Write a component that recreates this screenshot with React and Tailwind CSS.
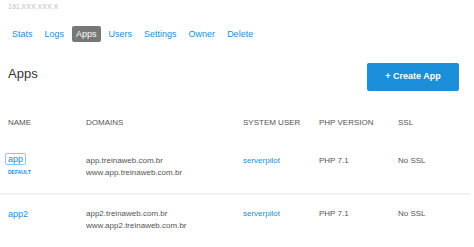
import React from 'react';

const navItems = ['Stats', 'Logs', 'Apps', 'Users', 'Settings', 'Owner', 'Delete'];

const apps = [
    { name: 'app', isDefault: true, domains: ['app.treinaweb.com.br', 'www.app.treinaweb.com.br'], user: 'serverpilot', php: 'PHP 7.1', ssl: 'No SSL' },
    { name: 'app2', isDefault: false, domains: ['app2.treinaweb.com.br', 'www.app2.treinaweb.com.br'], user: 'serverpilot', php: 'PHP 7.1', ssl: 'No SSL' }
];

const cols = 'grid grid-cols-[78px_157px_76px_79px_1fr]';

export default function App() {
    return (
        <div className="w-[474px] h-[247px] overflow-hidden bg-white font-['Liberation_Sans',Arial,sans-serif]">
            {/* Server IP */}
            <div className="pt-[2px] pl-[8px] text-[7px] leading-[9px] text-[#bdbdbd]">191.XXX.XXX.X</div>

            {/* Tabs */}
            <nav className="mt-[15px] pl-[8px] flex gap-[4px]">
                {navItems.map((item) => (
                    <a
                        key={item}
                        href="#"
                        className={`px-[4px] h-[16px] leading-[16px] text-[9px] rounded-[2px] ${
                            item === 'Apps' ? 'bg-[#777777] text-white' : 'text-[#1b8dd6]'
                        }`}
                    >
                        {item}
                    </a>
                ))}
            </nav>

            {/* Heading */}
            <div className="mt-[21px] pl-[8px] pr-[15px] flex items-start justify-between">
                <h1 className="mt-[3px] text-[13px] leading-[16px] text-[#333333]">Apps</h1>
                <button className="w-[92px] h-[28px] rounded-[2px] bg-[#1b8fd9] text-white text-[9px] font-bold">
                    + Create App
                </button>
            </div>

            {/* Table */}
            <div className="mt-[27px]">
                <div className={`${cols} pl-[8px] text-[8px] leading-[10px] text-[#555555] uppercase`}>
                    <div>Name</div>
                    <div>Domains</div>
                    <div>System User</div>
                    <div>PHP Version</div>
                    <div>SSL</div>
                </div>

                {apps.map((app, i) => (
                    <div
                        key={app.name}
                        className={`${cols} pl-[8px] w-[470px] text-[8px] leading-[12px] ${
                            i === 0 ? 'pt-[27px] pb-[14px] border-b-2 border-[#f1f1f1]' : 'pt-[13px]'
                        }`}
                    >
                        <div>
                            {app.isDefault ? (
                                <>
                                    <span className="-ml-[3px] -mt-[2px] block w-fit px-[2px] border border-[#8fc7ee] rounded-[2px] text-[9px] leading-[10px] text-[#1b8dd6]">
                                        {app.name}
                                    </span>
                                    <div className="mt-[4px] text-[5px] leading-[6px] font-bold text-[#1b8dd6]">DEFAULT</div>
                                </>
                            ) : (
                                <span className="text-[9px] text-[#1b8dd6]">{app.name}</span>
                            )}
                        </div>
                        <div className="text-[#555555]">
                            {app.domains.map((d) => (
                                <div key={d}>{d}</div>
                            ))}
                        </div>
                        <div className="text-[#1b8dd6]">{app.user}</div>
                        <div className="text-[#555555]">{app.php}</div>
                        <div className="text-[#555555]">{app.ssl}</div>
                    </div>
                ))}
            </div>
        </div>
    );
}
